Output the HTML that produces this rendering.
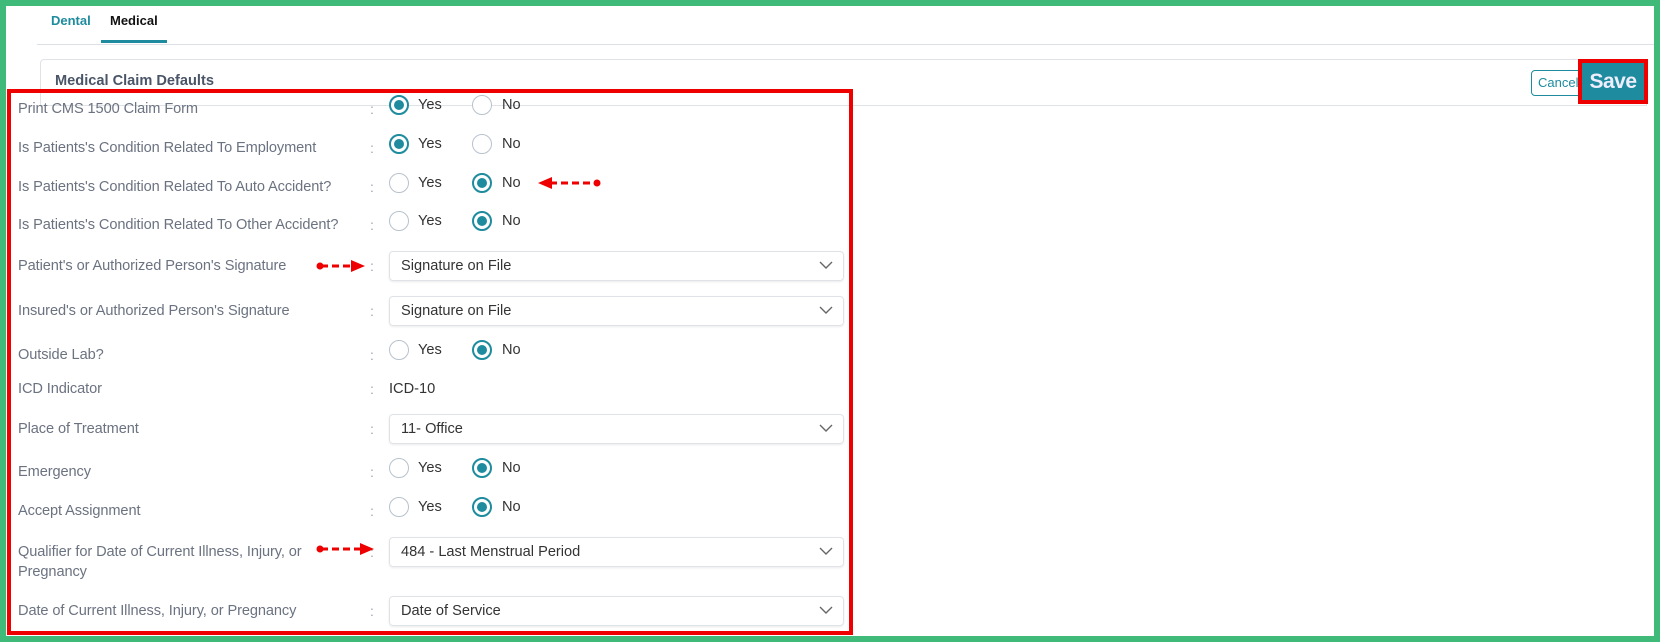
<!DOCTYPE html>
<html><head><meta charset="utf-8"><style>
*{margin:0;padding:0;box-sizing:border-box}
html,body{width:1660px;height:642px;overflow:hidden;background:#fff;font-family:"Liberation Sans",sans-serif}
.frame{position:absolute;left:0;top:0;width:1660px;height:642px;border:6px solid #3fba78;border-right-width:6px}
.abs{position:absolute}
.lbl{position:absolute;left:18px;font-size:14.6px;color:#6b7280;white-space:nowrap;transform:translateY(-50%);letter-spacing:-0.1px}
.col{position:absolute;left:370px;font-size:14px;color:#9ca3af;transform:translateY(-50%)}
.r{position:absolute;width:20px;height:20px;border-radius:50%;border:1.5px solid #b8c2cc;transform:translate(-50%,-50%);background:#fff}
.r.on{border:2px solid #1e8c9e}
.r.on::after{content:"";position:absolute;left:50%;top:50%;width:10px;height:10px;border-radius:50%;background:#1e8c9e;transform:translate(-50%,-50%)}
.rt{position:absolute;font-size:14.6px;color:#333;transform:translateY(-50%)}
.sel{position:absolute;left:389px;width:455px;height:30px;border:1px solid #dfe3e8;border-radius:4px;box-shadow:0 1px 2px rgba(0,0,0,.08);transform:translateY(-50%);font-size:14.6px;color:#333;padding-left:11px;line-height:28px}
.sel svg{position:absolute;right:10px;top:9px}
.val{position:absolute;left:389px;font-size:14.6px;color:#333;transform:translateY(-50%)}
</style></head><body>
<div class="frame"></div>
<div class="abs" style="left:51px;top:13px;font-size:13px;font-weight:bold;color:#1e8c9e">Dental</div>
<div class="abs" style="left:110px;top:13px;font-size:13px;font-weight:bold;color:#111">Medical</div>
<div class="abs" style="left:101px;top:40px;width:66px;height:3px;background:#1e8c9e"></div>
<div class="abs" style="left:37px;top:44px;width:1617px;height:1px;background:#dcdfe4"></div>
<div class="abs" style="left:40px;top:59px;width:1607px;height:47px;border:1px solid #dfe3e8;border-radius:4px 4px 0 0"></div>
<div class="abs" style="left:55px;top:73px;font-size:14.6px;font-weight:bold;color:#4a5568">Medical Claim Defaults</div>
<div class="abs" style="left:1531px;top:70px;width:52px;height:26px;border:1px solid #1e8c9e;border-radius:4px;font-size:13px;color:#1e8c9e;line-height:24px;padding-left:6px;overflow:hidden">Cancel</div>
<div class="abs" style="left:1578px;top:59px;width:70px;height:45px;border:4px solid #e00;background:#1e8c9e;color:#eef;font-weight:bold;font-size:21px;text-align:center;line-height:37px;letter-spacing:-0.5px">Save</div>
<div class="abs" style="left:7px;top:89px;width:846px;height:546px;border:4px solid #e00"></div>

<div class="lbl" style="top:109px">Print CMS 1500 Claim Form</div><div class="col" style="top:109px">:</div>
<div class="r on" style="left:399px;top:105px"></div><div class="rt" style="left:418px;top:105px">Yes</div>
<div class="r" style="left:482px;top:105px"></div><div class="rt" style="left:502px;top:105px">No</div>

<div class="lbl" style="top:148px">Is Patients's Condition Related To Employment</div><div class="col" style="top:148px">:</div>
<div class="r on" style="left:399px;top:144px"></div><div class="rt" style="left:418px;top:144px">Yes</div>
<div class="r" style="left:482px;top:144px"></div><div class="rt" style="left:502px;top:144px">No</div>

<div class="lbl" style="top:187px">Is Patients's Condition Related To Auto Accident?</div><div class="col" style="top:187px">:</div>
<div class="r" style="left:399px;top:183px"></div><div class="rt" style="left:418px;top:183px">Yes</div>
<div class="r on" style="left:482px;top:183px"></div><div class="rt" style="left:502px;top:183px">No</div>

<div class="lbl" style="top:225px">Is Patients's Condition Related To Other Accident?</div><div class="col" style="top:225px">:</div>
<div class="r" style="left:399px;top:221px"></div><div class="rt" style="left:418px;top:221px">Yes</div>
<div class="r on" style="left:482px;top:221px"></div><div class="rt" style="left:502px;top:221px">No</div>

<div class="lbl" style="top:266px">Patient's or Authorized Person's Signature</div><div class="col" style="top:266px">:</div>
<div class="sel" style="top:266px">Signature on File<svg width="14" height="9" viewBox="0 0 14 9"><path d="M1 1l6 6 6-6" fill="none" stroke="#666" stroke-width="1.4"/></svg></div>

<div class="lbl" style="top:311px">Insured's or Authorized Person's Signature</div><div class="col" style="top:311px">:</div>
<div class="sel" style="top:311px">Signature on File<svg width="14" height="9" viewBox="0 0 14 9"><path d="M1 1l6 6 6-6" fill="none" stroke="#666" stroke-width="1.4"/></svg></div>

<div class="lbl" style="top:355px">Outside Lab?</div><div class="col" style="top:355px">:</div>
<div class="r" style="left:399px;top:350px"></div><div class="rt" style="left:418px;top:350px">Yes</div>
<div class="r on" style="left:482px;top:350px"></div><div class="rt" style="left:502px;top:350px">No</div>

<div class="lbl" style="top:389px">ICD Indicator</div><div class="col" style="top:389px">:</div>
<div class="val" style="top:389px">ICD-10</div>

<div class="lbl" style="top:429px">Place of Treatment</div><div class="col" style="top:429px">:</div>
<div class="sel" style="top:429px">11- Office<svg width="14" height="9" viewBox="0 0 14 9"><path d="M1 1l6 6 6-6" fill="none" stroke="#666" stroke-width="1.4"/></svg></div>

<div class="lbl" style="top:472px">Emergency</div><div class="col" style="top:472px">:</div>
<div class="r" style="left:399px;top:468px"></div><div class="rt" style="left:418px;top:468px">Yes</div>
<div class="r on" style="left:482px;top:468px"></div><div class="rt" style="left:502px;top:468px">No</div>

<div class="lbl" style="top:511px">Accept Assignment</div><div class="col" style="top:511px">:</div>
<div class="r" style="left:399px;top:507px"></div><div class="rt" style="left:418px;top:507px">Yes</div>
<div class="r on" style="left:482px;top:507px"></div><div class="rt" style="left:502px;top:507px">No</div>

<div class="lbl" style="top:562px;line-height:20px">Qualifier for Date of Current Illness, Injury, or<br>Pregnancy</div><div class="col" style="top:552px">:</div>
<div class="sel" style="top:552px">484 - Last Menstrual Period<svg width="14" height="9" viewBox="0 0 14 9"><path d="M1 1l6 6 6-6" fill="none" stroke="#666" stroke-width="1.4"/></svg></div>

<div class="lbl" style="top:611px">Date of Current Illness, Injury, or Pregnancy</div><div class="col" style="top:611px">:</div>
<div class="sel" style="top:611px">Date of Service<svg width="14" height="9" viewBox="0 0 14 9"><path d="M1 1l6 6 6-6" fill="none" stroke="#666" stroke-width="1.4"/></svg></div>

<svg class="abs" style="left:0;top:0" width="1660" height="642">
<g stroke="#e00" stroke-width="3" stroke-dasharray="7 4" fill="none">
<path d="M550 183H596"/><path d="M321 266H352"/><path d="M321 549H361"/>
</g>
<g fill="#e00">
<path d="M538 183l14-6v12z"/><circle cx="597" cy="183" r="3.5"/>
<path d="M365 266l-14-6v12z"/><circle cx="320" cy="266" r="3.5"/>
<path d="M374 549l-14-6v12z"/><circle cx="320" cy="549" r="3.5"/>
</g>
</svg>
</body></html>
